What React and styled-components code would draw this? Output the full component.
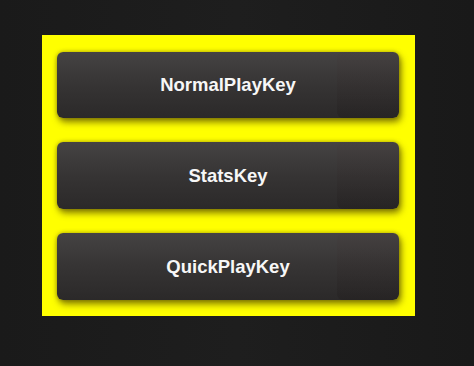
import React from "react";
import styled, { createGlobalStyle } from "styled-components";

const GlobalStyle = createGlobalStyle`
  html, body {
    margin: 0;
    padding: 0;
    background: #1b1b1b;
  }
  body {
    font-family: "Liberation Sans", Arial, sans-serif;
  }
`;

const Screen = styled.div`
  width: 474px;
  height: 366px;
  box-sizing: border-box;
  padding: 35px 0 0 42px;
  background: linear-gradient(90deg, #1a1a1a 0%, #1e1e1e 50%, #191919 100%);
`;

const Panel = styled.div`
  width: 373px;
  height: 281px;
  box-sizing: border-box;
  padding: 17px 16px 16px 15px;
  background: #ffff00;
  display: flex;
  flex-direction: column;
  gap: 24px;
`;

const KeyButton = styled.button`
  position: relative;
  height: ${(p) => p.$h}px;
  width: 342px;
  border: none;
  border-radius: 6px;
  background: linear-gradient(180deg, #454343 0%, #363434 50%, #2b2929 100%);
  box-shadow: 2px 4px 7px rgba(100, 90, 0, 0.8), 0 0 4px rgba(120, 110, 0, 0.55);
  color: #f7f7f7;
  font-family: "Liberation Sans", Arial, sans-serif;
  font-weight: bold;
  font-size: 18.5px;
  padding: 0;
  cursor: pointer;

  &::after {
    content: "";
    position: absolute;
    top: 0;
    right: 0;
    bottom: 0;
    width: 62px;
    border-radius: 6px;
    background: linear-gradient(180deg, rgba(70, 60, 60, 0.25), rgba(20, 15, 15, 0.2));
  }
`;

const keys = [
  { label: "NormalPlayKey", h: 66 },
  { label: "StatsKey", h: 67 },
  { label: "QuickPlayKey", h: 67 },
];

export default function App() {
  return (
    <>
      <GlobalStyle />
      <Screen>
        <Panel>
          {keys.map((k) => (
            <KeyButton key={k.label} $h={k.h}>
              {k.label}
            </KeyButton>
          ))}
        </Panel>
      </Screen>
    </>
  );
}
